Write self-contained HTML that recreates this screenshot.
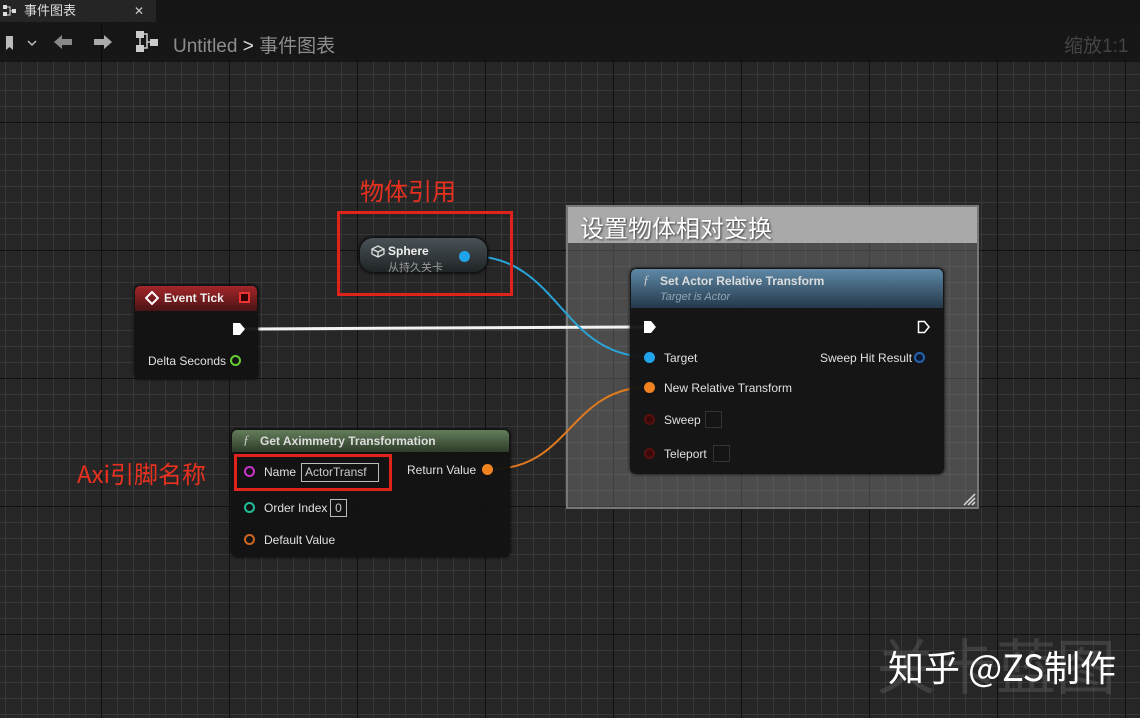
<!DOCTYPE html><html><head><meta charset="utf-8"><style>
*{margin:0;padding:0;box-sizing:border-box}
body{width:1140px;height:718px;overflow:hidden;position:relative;font-family:"Liberation Sans","Noto Sans CJK SC",sans-serif;
background-color:#262626;
background-image:
linear-gradient(90deg,#111 0 1px,transparent 1px),
linear-gradient(0deg,#111 0 1px,transparent 1px),
linear-gradient(90deg,#383838 0 1px,transparent 1px),
linear-gradient(0deg,#383838 0 1px,transparent 1px);
background-size:128px 128px,128px 128px,16px 16px,16px 16px;
background-position:101px 0,0 123px,5px 0,0 11px;}
.abs{position:absolute}
.node{position:absolute;background:rgba(18,18,18,.95);border-radius:6px;box-shadow:0 0 3px #000;color:#ddd;font-size:12px}
.pin{position:absolute;width:11px;height:11px;border-radius:50%}
.lbl{position:absolute;font-size:12px;color:#e0e0e0;white-space:nowrap}
.red{position:absolute;border:3px solid #e0231c}
.rt{position:absolute;color:#e8301f;font-size:24px;font-family:"Noto Sans CJK SC",sans-serif}
</style></head><body>
<div class="abs" style="left:0;top:0;width:1140px;height:22px;background:#151515"></div>
<div class="abs" style="left:0;top:0;width:156px;height:22px;background:#252525;color:#ddd;font-size:13px;line-height:22px;padding-left:24px">事件图表<span style="position:absolute;left:134px;color:#ccc;font-size:12px">✕</span></div>
<svg class="abs" style="left:3px;top:5px" width="14" height="12"><rect x="0" y="0" width="4" height="4" fill="#ddd"/><rect x="0" y="7" width="4" height="4" fill="#ddd"/><rect x="9" y="4" width="4" height="4" fill="#ddd"/><path d="M4 2h3v8h-3M7 6h2" stroke="#ddd" fill="none"/></svg>
<div class="abs" style="left:0;top:22px;width:1140px;height:40px;background:rgba(20,20,20,.85)"></div>
<div class="abs" style="left:101px;top:22px;width:1px;height:40px;background:#0a0a0a"></div>
<svg class="abs" style="left:4px;top:34px" width="34" height="18"><path d="M2 2h7v14l-3.5-3-3.5 3z" fill="#bbb"/><path d="M24 7l4 4 4-4" stroke="#bbb" fill="none" stroke-width="1.5"/></svg>
<svg class="abs" style="left:52px;top:33px" width="62" height="18"><path d="M2 9l8-7v4h10v6h-10v4z" fill="#888"/><path d="M60 9l-8-7v4h-10v6h10v4z" fill="#aaa"/></svg>
<svg class="abs" style="left:136px;top:31px" width="24" height="22"><rect x="0" y="0" width="8" height="7" fill="#ccc"/><rect x="0" y="14" width="8" height="7" fill="#ccc"/><rect x="14" y="8" width="8" height="7" fill="#ccc"/><path d="M4 7v7M8 3h3v14h-3M11 11h3" stroke="#ccc" fill="none" stroke-width="1.5"/></svg>
<div class="abs" style="left:173px;top:31px;font-size:19px;color:#8d8d8d">Untitled <span style="color:#ddd">&gt;</span> 事件图表</div>
<div class="abs" style="left:1064px;top:31px;font-size:19px;color:#444">缩放1:1</div>

<div class="abs" style="left:566px;top:205px;width:413px;height:304px;background:rgba(140,140,140,.38);border:2px solid #777"></div>
<div class="abs" style="left:568px;top:207px;width:409px;height:36px;background:#a9a9a9;color:#fff;font-size:24px;line-height:40px;padding-left:12px;text-shadow:1px 1px 2px #333;font-family:'Noto Sans CJK SC',sans-serif">设置物体相对变换</div>
<svg class="abs" style="left:962px;top:492px" width="14" height="14"><path d="M2 13L13 2M6 13L13 6M10 13l3-3" stroke="#ddd" stroke-width="1.5"/></svg>

<svg class="abs" style="left:0;top:0" width="1140" height="718">
<path d="M242 329 L645 327" stroke="#f2f2f2" stroke-width="3" fill="none"/>
<path d="M470 256 C560 256 560 357 650 357" stroke="#2aa3d6" stroke-width="2" fill="none"/>
<path d="M492 469 C570 469 570 387 650 387" stroke="#e07a20" stroke-width="2" fill="none"/>
</svg>

<div class="abs" style="left:359px;top:237px;width:129px;height:36px;border-radius:14px;background:linear-gradient(#4a5257,#1f2426);border:1px solid #111;box-shadow:0 0 3px #000"></div>
<div class="abs" style="left:388px;top:244px;color:#eee;font-size:12px;font-weight:bold">Sphere</div>
<div class="abs" style="left:388px;top:259px;color:#999;font-size:11px">从持久关卡</div>
<svg class="abs" style="left:370px;top:244px" width="16" height="14"><path d="M2 5l6-3 6 3v5l-6 3-6-3z M2 5l6 3 6-3M8 8v5" stroke="#ddd" fill="none" stroke-width="1.3"/></svg>
<div class="pin" style="left:459px;top:251px;background:#21a3ea"></div>
<div class="red" style="left:337px;top:211px;width:176px;height:85px"></div>
<div class="rt" style="left:360px;top:172px">物体引用</div>

<div class="node" style="left:134px;top:285px;width:124px;height:94px"></div>
<div class="abs" style="left:135px;top:286px;width:122px;height:25px;border-radius:5px 5px 0 0;background:linear-gradient(#a4262a,#4a1415)"></div>
<svg class="abs" style="left:145px;top:291px" width="14" height="14"><path d="M7 1l6 6-6 6-6-6z" fill="none" stroke="#fff" stroke-width="2"/></svg>
<div class="abs" style="left:164px;top:291px;color:#eee;font-size:12px;font-weight:bold">Event Tick</div>
<div class="abs" style="left:239px;top:292px;width:11px;height:11px;border:2px solid #e33;background:#300"></div>
<svg class="abs" style="left:232px;top:322px" width="14" height="14"><path d="M1 1h7l5 6-5 6h-7z" fill="#fff"/></svg>
<div class="lbl" style="left:148px;top:354px">Delta Seconds</div>
<div class="pin" style="left:230px;top:355px;border:2px solid #6c3;background:transparent"></div>

<div class="node" style="left:231px;top:429px;width:279px;height:128px"></div>
<div class="abs" style="left:232px;top:430px;width:277px;height:22px;border-radius:5px 5px 0 0;background:linear-gradient(#637d5a,#2e3b2a)"></div>
<div class="abs" style="left:243px;top:432px;color:#ccc;font-style:italic;font-size:13px;font-family:'Liberation Serif',serif">ƒ</div>
<div class="abs" style="left:260px;top:434px;color:#ddd;font-size:12px;font-weight:bold">Get Aximmetry Transformation</div>
<div class="pin" style="left:244px;top:466px;border:2px solid #c3c;background:transparent"></div>
<div class="lbl" style="left:264px;top:465px">Name</div>
<div class="abs" style="left:301px;top:463px;width:78px;height:19px;border:1px solid #bbb;color:#ccc;font-size:12px;padding-left:3px;line-height:17px;overflow:hidden;white-space:nowrap">ActorTransf</div>
<div class="lbl" style="left:407px;top:463px">Return Value</div>
<div class="pin" style="left:482px;top:464px;background:#f08320"></div>
<div class="pin" style="left:244px;top:502px;border:2px solid #2b9;background:transparent"></div>
<div class="lbl" style="left:264px;top:501px">Order Index</div>
<div class="abs" style="left:330px;top:499px;width:17px;height:18px;border:1px solid #bbb;color:#ccc;font-size:12px;text-align:center;line-height:16px">0</div>
<div class="pin" style="left:244px;top:534px;border:2px solid #c62;background:transparent"></div>
<div class="lbl" style="left:264px;top:533px">Default Value</div>
<div class="red" style="left:234px;top:454px;width:158px;height:37px"></div>
<div class="rt" style="left:77px;top:455px">Axi引脚名称</div>

<div class="node" style="left:630px;top:268px;width:314px;height:206px"></div>
<div class="abs" style="left:631px;top:269px;width:312px;height:39px;border-radius:5px 5px 0 0;background:linear-gradient(#5e88a6,#25394a)"></div>
<div class="abs" style="left:643px;top:272px;color:#ccc;font-style:italic;font-size:13px;font-family:'Liberation Serif',serif">ƒ</div>
<div class="abs" style="left:660px;top:274px;color:#ddd;font-size:12px;font-weight:bold">Set Actor Relative Transform</div>
<div class="abs" style="left:660px;top:291px;color:#8fa6b6;font-size:11px;font-style:italic">Target is Actor</div>
<svg class="abs" style="left:643px;top:320px" width="14" height="14"><path d="M1 1h7l5 6-5 6h-7z" fill="#fff"/></svg>
<svg class="abs" style="left:917px;top:320px" width="14" height="14"><path d="M1.5 1.5h6l4.5 5.5-4.5 5.5h-6z" fill="none" stroke="#fff" stroke-width="1.5"/></svg>
<div class="pin" style="left:644px;top:352px;background:#21a3ea"></div>
<div class="lbl" style="left:664px;top:351px">Target</div>
<div class="lbl" style="left:820px;top:351px">Sweep Hit Result</div>
<div class="pin" style="left:914px;top:352px;border:2px solid #2563b0;background:#0b1a33"></div>
<div class="pin" style="left:644px;top:382px;background:#f08320"></div>
<div class="lbl" style="left:664px;top:381px">New Relative Transform</div>
<div class="pin" style="left:644px;top:414px;background:#3a0a0a;border:2px solid #5a0f0f"></div>
<div class="lbl" style="left:664px;top:413px">Sweep</div>
<div class="abs" style="left:705px;top:411px;width:17px;height:17px;background:#141414;border:1px solid #333"></div>
<div class="pin" style="left:644px;top:448px;background:#3a0a0a;border:2px solid #5a0f0f"></div>
<div class="lbl" style="left:664px;top:447px">Teleport</div>
<div class="abs" style="left:713px;top:445px;width:17px;height:17px;background:#141414;border:1px solid #333"></div>

<div class="abs" style="left:876px;top:634px;font-size:60px;color:rgba(110,110,110,.35);font-family:'Noto Sans CJK SC',sans-serif;line-height:1">关卡蓝图</div>
<div class="abs" style="left:888px;top:648px;font-size:36px;color:#fff;font-family:'Noto Sans CJK SC',sans-serif;line-height:1;white-space:nowrap">知乎 @ZS制作</div>
</body></html>
